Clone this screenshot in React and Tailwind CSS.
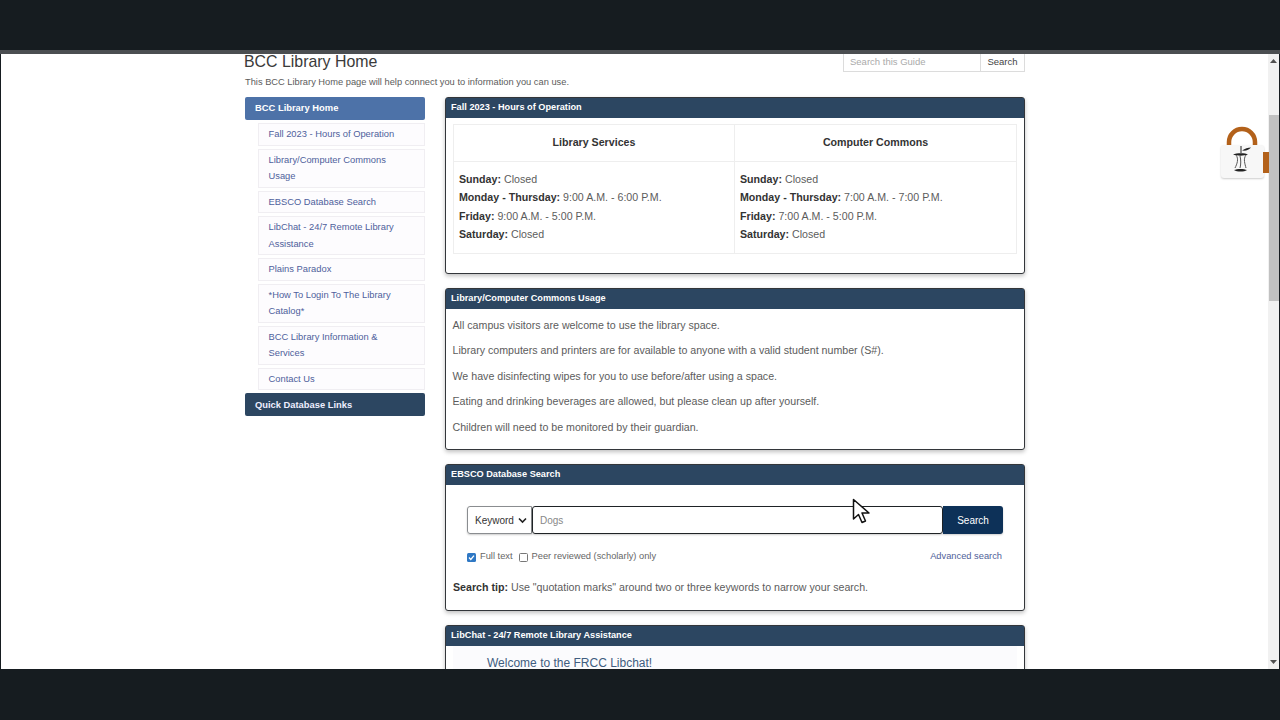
const nav = [
  "Fall 2023 - Hours of Operation",
  "Library/Computer Commons Usage",
  "EBSCO Database Search",
  "LibChat - 24/7 Remote Library Assistance",
  "Plains Paradox",
  "*How To Login To The Library Catalog*",
  "BCC Library Information & Services",
  "Contact Us",
];

const hours = [
  ["Library Services", "9:00 A.M. - 6:00 P.M.", "9:00 A.M. - 5:00 P.M."],
  ["Computer Commons", "7:00 A.M. - 7:00 P.M.", "7:00 A.M. - 5:00 P.M."],
];

const usage = [
  "All campus visitors are welcome to use the library space.",
  "Library computers and printers are for available to anyone with a valid student number (S#).",
  "We have disinfecting wipes for you to use before/after using a space.",
  "Eating and drinking beverages are allowed, but please clean up after yourself.",
  "Children will need to be monitored by their guardian.",
];

function Panel({ title, children, className = "" }) {
  return (
    <section className={`rounded-[3px] border border-[#33363a] bg-white shadow-[0_2px_4px_rgba(0,0,0,0.25)] ${className}`}>
      <h2 className="flex h-[20px] items-center bg-[#2c4661] px-[5px] text-[9.2px] font-bold text-white">{title}</h2>
      {children}
    </section>
  );
}

function Row({ label, value }) {
  return (
    <div className="h-[18.4px] leading-[18.4px]">
      <b className="font-bold text-[#333]">{label}</b> {value}
    </div>
  );
}

export default function App() {
  return (
    <div className="relative flex h-[720px] w-[1280px] flex-col overflow-hidden bg-[#161c20] font-['Liberation_Sans',sans-serif] text-[10.65px] text-[#5c5c5c]">
      <div className="h-[50px] shrink-0" />
      <div className="h-[4px] shrink-0 bg-[#4b4e51]" />
      <div className="flex h-[615px] shrink-0 pl-px pr-px">
        <main className="min-w-0 flex-1 overflow-hidden bg-white pl-[244px]">
          <div className="w-[780px]">
            <div className="flex h-[18px] items-start justify-between">
              <h1 className="-ml-px text-[15.9px] leading-[15px] text-[#3a3a3a]">BCC Library Home</h1>
              <div className="flex h-[18px] w-[182px] border border-t-0 border-[#dcdcdc] text-[9.5px]">
                <span className="flex flex-1 items-center pl-[6px] text-[#aaa]">Search this Guide</span>
                <span className="flex w-[44px] items-center justify-center border-l border-[#dcdcdc] text-[#444]">Search</span>
              </div>
            </div>
            <p className="mt-[3px] h-[22px] text-[9.3px] leading-[15px]">This BCC Library Home page will help connect you to information you can use.</p>

            <div className="flex gap-[20px]">
              <aside className="w-[180px] shrink-0">
                <div className="flex h-[23px] items-center rounded-[2px] bg-[#4d72a8] pl-[10px] text-[9.4px] font-bold text-white">BCC Library Home</div>
                <ul className="ml-[13px] mt-[3px] flex flex-col gap-[3px]">
                  {nav.map((n) => (
                    <li key={n} className="border border-[#f0eef2] bg-[#fdfcfe] py-[2px] pl-[9.5px] pr-[10px] text-[9.35px] leading-[16.5px] text-[#4f5f9c]">{n}</li>
                  ))}
                </ul>
                <div className="mt-[3px] flex h-[23px] items-center rounded-[2px] bg-[#2c4661] pl-[10px] pt-px text-[9.35px] font-bold text-[#eef]">Quick Database Links</div>
              </aside>

              <div className="flex w-[580px] shrink-0 flex-col gap-[14px]">
                <Panel title="Fall 2023 - Hours of Operation" className="h-[177px]">
                  <div className="mx-[7px] mt-[6px] grid h-[130px] grid-cols-2 border border-[#eeeeee]">
                    {hours.map(([name, mt, fri], i) => (
                      <div key={name} className={i === 0 ? "border-r border-[#eeeeee]" : ""}>
                        <div className="flex h-[37px] items-center justify-center border-b border-[#eeeeee] font-bold text-[#333]">{name}</div>
                        <div className="pl-[5px] pt-[8px]">
                          <Row label="Sunday:" value="Closed" />
                          <Row label="Monday - Thursday:" value={mt} />
                          <Row label="Friday:" value={fri} />
                          <Row label="Saturday:" value="Closed" />
                        </div>
                      </div>
                    ))}
                  </div>
                </Panel>

                <Panel title="Library/Computer Commons Usage" className="h-[162px]">
                  <div className="flex flex-col gap-[9px] pl-[6.5px] pt-[8px] leading-[16.4px]">
                    {usage.map((u) => <p key={u}>{u}</p>)}
                  </div>
                </Panel>

                <Panel title="EBSCO Database Search" className="h-[147px]">
                  <div className="mx-[21px] mt-[21px] flex h-[28px]">
                    <div className="flex w-[65px] items-center justify-between rounded-l-[3px] border border-[#8a8d90] pl-[7px] pr-[4.5px] text-[10px] text-[#333] shadow-[0_1px_2px_rgba(0,0,0,0.2)]">
                      Keyword
                      <svg width="9" height="7" viewBox="0 0 9 7" fill="none" stroke="#222" strokeWidth="1.6"><path d="M1 1.500l3.500 3.500L8 1.500" /></svg>
                    </div>
                    <div className="flex flex-1 items-center rounded-[3px] border-[1.5px] border-[#1f2326] pl-[7px] text-[10px] text-[#888] shadow-[0_1px_2px_rgba(0,0,0,0.2)]">Dogs</div>
                    <div className="flex w-[60px] items-center justify-center rounded-r-[3px] bg-[#0d3158] text-[10px] text-white shadow-[0_1px_2px_rgba(0,0,0,0.2)]">Search</div>
                  </div>
                  <div className="ml-[21px] mr-[22px] mt-[16px] flex h-[14px] items-center text-[9.3px] text-[#666]">
                    <svg className="mr-[4px]" width="9" height="9" viewBox="0 0 9 9"><rect width="9" height="9" rx="1.500" fill="#2f78c4" /><path d="M2 4.500l1.800 1.900L7 2.600" fill="none" stroke="#fff" strokeWidth="1.300" /></svg>
                    <span>Full text</span>
                    <span className="ml-[6px] mr-[4px] h-[9px] w-[9px] rounded-[1.5px] border border-[#777] bg-white" />
                    <span>Peer reviewed (scholarly) only</span>
                    <span className="ml-auto text-[#4f6199]">Advanced search</span>
                  </div>
                  <p className="ml-[7px] mt-[15px] leading-[16px]"><b className="font-bold text-[#333]">Search tip:</b> Use "quotation marks" around two or three keywords to narrow your search.</p>
                </Panel>

                <Panel title="LibChat - 24/7 Remote Library Assistance" className="h-[120px]">
                  <div className="mx-[7px] bg-[#fbfbfd] pl-[34px] pt-[10px] text-[12px] leading-[14px] text-[#3f5d80]">Welcome to the FRCC Libchat!</div>
                </Panel>
              </div>
            </div>
          </div>
        </main>
        <div className="flex w-[11px] shrink-0 flex-col items-center justify-between bg-[#f1f1f1] py-[5px]">
          <svg width="7" height="4" viewBox="0 0 7 4"><path d="M3.500 0L7 4H0z" fill="#505050" /></svg>
          <svg width="7" height="4" viewBox="0 0 7 4"><path d="M3.500 4L7 0H0z" fill="#505050" /></svg>
        </div>
      </div>
      <div className="flex-1" />

      <div className="absolute left-[1269px] top-[115px] h-[186px] w-[10px] bg-[#c1c1c1]" />

      <div className="absolute left-[1221px] top-[126px] h-[52px] w-[48px]">
        <svg className="absolute left-[5px] top-0" width="32" height="20" viewBox="0 0 32 20" fill="none"><path d="M3 20V16a13 13 0 0 1 26 0v4" stroke="#b3611a" strokeWidth="4.500" /></svg>
        <div className="absolute left-0 top-[19px] h-[33px] w-[43px] rounded-[3px] bg-[#f7f7f7] shadow-[0_1px_2px_rgba(0,0,0,0.2)]" />
        <div className="absolute left-[42px] top-[26px] h-[21px] w-[6px] bg-[#b3611a]" />
        <svg className="absolute left-[10px] top-[19px]" width="22" height="30" viewBox="0 0 22 30" fill="none">
          <path d="M10 1v7" stroke="#222" strokeWidth="1" />
          <path d="M11 5.500c3-2 6-3 9-3-2 2.500-5 3.500-9 3z" fill="#222" />
          <path d="M2 9.500c3-1.500 12-2 15 0-4 1.500-11 1.500-15 0z" fill="#222" />
          <path d="M5 10c3 4 1 9-1 13M15 10c-3 4-1 9 0 13M9 11c1 4 1 8 0 12" stroke="#555" strokeWidth="1" />
          <path d="M3 25c3-1.500 10-1.500 13 0-3 2-10 2-13 0z" fill="#222" />
        </svg>
      </div>

      <svg className="absolute left-[852px] top-[498px]" width="19" height="28" viewBox="0 0 19 28">
        <path d="M1.500 1.500V21l5-4.500 3.500 8 3.500-1.500-3.500-8H17z" fill="#fff" stroke="#111" strokeWidth="1.500" strokeLinejoin="round" />
      </svg>
    </div>
  );
}
